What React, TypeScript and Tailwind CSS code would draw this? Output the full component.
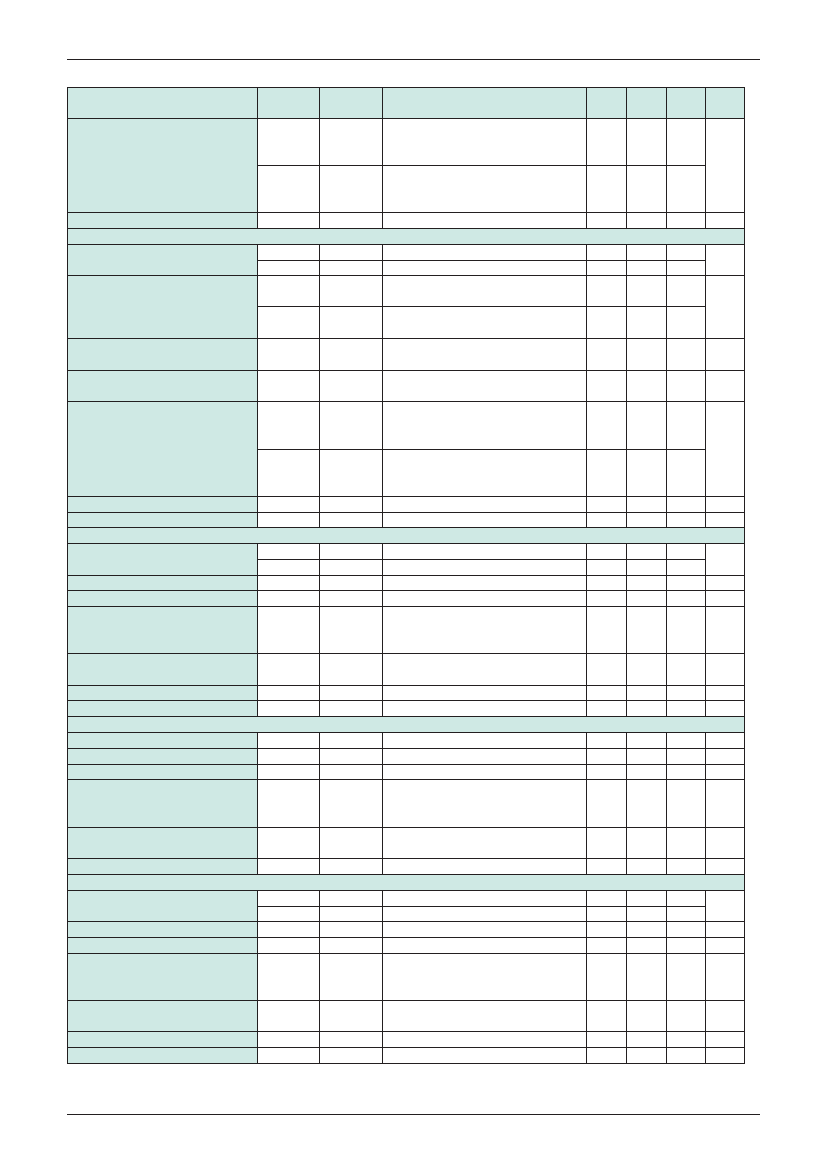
import * as React from "react";

const midCols = ["w-[61px]", "w-[62px]", "w-[203px]", "w-[39px]", "w-[39px]", "w-[38px]"];

type Part =
  | { kind: "group"; rows: string[]; header?: boolean }
  | { kind: "section"; h: string };

// heights are the space between rule lines (line pitch minus 1px)
const parts: Part[] = [
  { kind: "group", rows: ["h-[30px]"], header: true },
  { kind: "group", rows: ["h-[46px]", "h-[46px]"] },
  { kind: "group", rows: ["h-[15px]"] },
  { kind: "section", h: "h-[15px]" },
  { kind: "group", rows: ["h-[15px]", "h-[14px]"] },
  { kind: "group", rows: ["h-[30px]", "h-[31px]"] },
  { kind: "group", rows: ["h-[31px]"] },
  { kind: "group", rows: ["h-[30px]"] },
  { kind: "group", rows: ["h-[47px]", "h-[46px]"] },
  { kind: "group", rows: ["h-[15px]"] },
  { kind: "group", rows: ["h-[14px]"] },
  { kind: "section", h: "h-[15px]" },
  { kind: "group", rows: ["h-[15px]", "h-[15px]"] },
  { kind: "group", rows: ["h-[14px]"] },
  { kind: "group", rows: ["h-[15px]"] },
  { kind: "group", rows: ["h-[46px]"] },
  { kind: "group", rows: ["h-[31px]"] },
  { kind: "group", rows: ["h-[14px]"] },
  { kind: "group", rows: ["h-[15px]"] },
  { kind: "section", h: "h-[15px]" },
  { kind: "group", rows: ["h-[15px]"] },
  { kind: "group", rows: ["h-[15px]"] },
  { kind: "group", rows: ["h-[14px]"] },
  { kind: "group", rows: ["h-[47px]"] },
  { kind: "group", rows: ["h-[30px]"] },
  { kind: "group", rows: ["h-[15px]"] },
  { kind: "section", h: "h-[15px]" },
  { kind: "group", rows: ["h-[15px]", "h-[14px]"] },
  { kind: "group", rows: ["h-[15px]"] },
  { kind: "group", rows: ["h-[15px]"] },
  { kind: "group", rows: ["h-[46px]"] },
  { kind: "group", rows: ["h-[30px]"] },
  { kind: "group", rows: ["h-[15px]"] },
  { kind: "group", rows: ["h-[15px]"] },
];

function Group({ rows, header }: { rows: string[]; header?: boolean }) {
  const fill = header ? "bg-[#cfe9e4]" : "bg-white";
  return (
    <div className="flex gap-px">
      <div className="w-[189px] bg-[#cfe9e4]" />
      <div className="flex flex-col gap-px">
        {rows.map((h, i) => (
          <div key={i} className="flex gap-px">
            {midCols.map((w, j) => (
              <div key={j} className={`${w} ${h} ${fill}`} />
            ))}
          </div>
        ))}
      </div>
      <div className={`w-[38px] ${fill}`} />
    </div>
  );
}

export default function App() {
  return (
    <div className="min-h-[1169px] bg-white pl-[67px] pt-[59px] font-['Liberation_Sans',sans-serif]">
      <div className="h-px w-[693px] bg-[#231f20]" />
      <div className="mt-[27px] flex w-[678px] flex-col gap-px bg-[#231f20] p-px">
        {parts.map((p, i) =>
          p.kind === "section" ? (
            <div key={i} className={`${p.h} bg-[#cfe9e4]`} />
          ) : (
            <Group key={i} rows={p.rows} header={p.header} />
          )
        )}
      </div>
      <div className="mt-[50px] h-px w-[693px] bg-[#231f20]" />
    </div>
  );
}
